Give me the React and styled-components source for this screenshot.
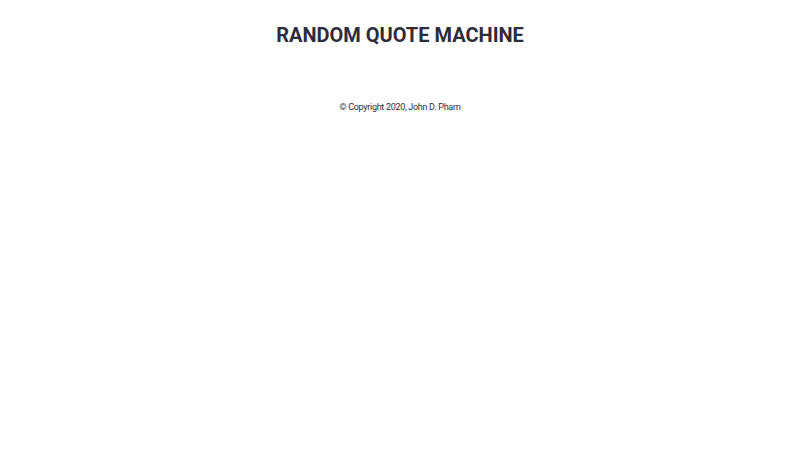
import styled, { createGlobalStyle } from 'styled-components';

const GlobalStyle = createGlobalStyle`
    body {
        margin: 0;
        background: #ffffff;
        font-family: Roboto, "Liberation Sans", sans-serif;
        color: #2c2d3b;
    }
`;

export default function App() {
    return (
        <>
            <GlobalStyle />
            <Page>
                <Title>RANDOM QUOTE MACHINE</Title>
                <QuoteBox />
                <Footer>© Copyright 2020, John D. Pham</Footer>
            </Page>
        </>
    );
}

const Page = styled.div`
    display: flex;
    flex-direction: column;
    align-items: center;
    padding-top: 23px;
`;

const Title = styled.h1`
    margin: 0;
    font-size: 20px;
    font-weight: 700;
    line-height: 24px;
    color: #2c2d3b;
`;

// the quote card has no content yet, it just keeps the space
const QuoteBox = styled.div`
    height: 54px;
`;

const Footer = styled.p`
    margin: 0;
    font-size: 9px;
    line-height: 12px;
    letter-spacing: -0.3px;
    color: #2c2d3b;
`;
